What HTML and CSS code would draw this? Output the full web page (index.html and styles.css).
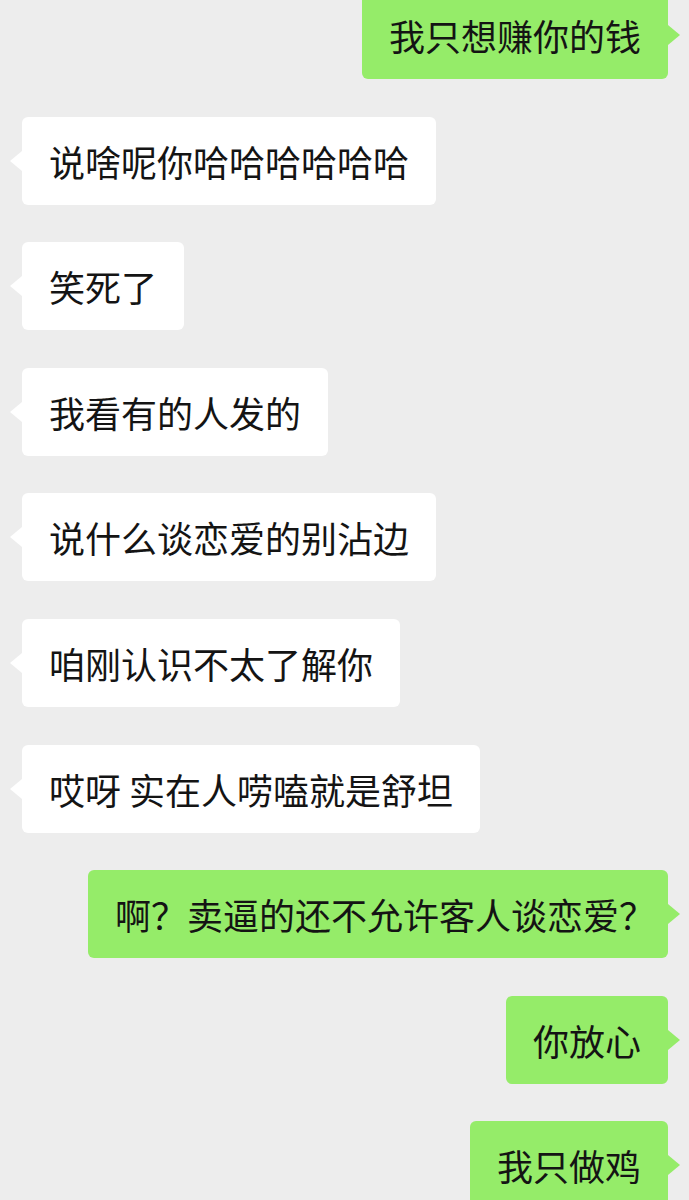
FILE: index.html
```html
<!DOCTYPE html>
<html lang="zh-CN">
    <head>
        <meta charset="utf-8">
        <meta name="viewport" content="width=device-width, initial-scale=1.0">
        <title>聊天</title>
        <link rel="stylesheet" href="styles.css">
    </head>
    <body>
        <div class="chat">
            <div class="row mine"><div class="bubble">我只想赚你的钱</div></div>
            <div class="row theirs"><div class="bubble">说啥呢你哈哈哈哈哈哈</div></div>
            <div class="row theirs"><div class="bubble">笑死了</div></div>
            <div class="row theirs"><div class="bubble">我看有的人发的</div></div>
            <div class="row theirs"><div class="bubble">说什么谈恋爱的别沾边</div></div>
            <div class="row theirs"><div class="bubble">咱刚认识不太了解你</div></div>
            <div class="row theirs"><div class="bubble">哎呀 实在人唠嗑就是舒坦</div></div>
            <div class="row mine"><div class="bubble">啊？卖逼的还不允许客人谈恋爱<span class="trail">？</span></div></div>
            <div class="row mine"><div class="bubble">你放心</div></div>
            <div class="row mine"><div class="bubble">我只做鸡</div></div>
        </div>
    </body>
</html>
```

FILE: styles.css
```css
html, body {
    margin: 0;
    padding: 0;
    background-color: #ededed;
}

body {
    width: 689px;
    height: 1200px;
    overflow: hidden;
    color: #141414;
    font-family: "Noto Sans CJK SC", "Noto Sans", sans-serif;
}

.chat {
    display: flex;
    flex-direction: column;
    gap: 37.6px;
    margin-top: -9px;
}

.row {
    display: flex;
}

.theirs {
    justify-content: flex-start;
    padding-left: 22px;
}

.mine {
    justify-content: flex-end;
    padding-right: 21px;
}

.bubble {
    position: relative;
    height: 88px;
    padding: 0 27px;
    font-size: 36px;
    line-height: 88px;
    border-radius: 6px;
    white-space: nowrap;
}

/* full-width ? at the end of a line: trim its empty half */
.trail {
    margin-right: -14px;
}

.theirs .bubble {
    background-color: #ffffff;
}

.mine .bubble {
    background-color: #95ec69;
}

/* little tail pointing at the speaker */
.bubble::before {
    content: "";
    position: absolute;
    top: 34px;
    border-top: 10px solid transparent;
    border-bottom: 10px solid transparent;
}

.theirs .bubble::before {
    left: -12px;
    border-right: 12px solid #ffffff;
}

.mine .bubble::before {
    right: -12px;
    border-left: 12px solid #95ec69;
}
```
